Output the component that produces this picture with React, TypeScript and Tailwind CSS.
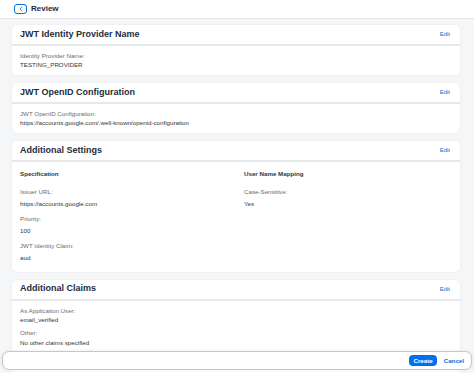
import { ChevronLeft } from "lucide-react";

const font = { fontFamily: "'Liberation Sans', Arial, sans-serif" };

function Card({ title, children }: { title: string; children: React.ReactNode }) {
  return (
    <section className="rounded-[5px] bg-white shadow-[0_0_2px_rgba(0,0,0,0.08)]">
      <div className="flex h-[21px] items-center justify-between border-b-2 border-[#e6e8ea] pl-2 pr-[10px]">
        <h2 className="text-[9px] font-bold text-[#1d2d3e]">{title}</h2>
        <button className="text-[6px] text-[#0a6ed1]">Edit</button>
      </div>
      {children}
    </section>
  );
}

function Field({ label, value, gap = "" }: { label: string; value: string; gap?: string }) {
  return (
    <div>
      <p className="text-[6.2px] leading-[9px] text-[#6a6d70]">{label}</p>
      <p className={`${gap} text-[6.2px] leading-[9px] text-[#32363a]`}>{value}</p>
    </div>
  );
}

export default function App() {
  return (
    <div style={font} className="relative h-[373px] overflow-hidden bg-[#f5f6f7]">
      <header className="flex h-[18px] items-center gap-[4px] bg-white pl-[14px] shadow-[0_1px_1px_rgba(0,0,0,0.05)]">
        <span className="flex h-[10px] w-[13px] items-center justify-center rounded-[3px] border border-[#0a6ed1] text-[#0a6ed1]">
          <ChevronLeft className="h-[8px] w-[8px]" strokeWidth={2.5} />
        </span>
        <span className="text-[8px] font-bold text-[#1d2d3e]">Review</span>
      </header>

      <main className="space-y-[8px] pl-3 pr-[14px] pt-[7px]">
        <Card title="JWT Identity Provider Name">
          <div className="px-2 pb-[6px] pt-[5px]">
            <Field label="Identity Provider Name:" value="TESTING_PROVIDER" />
          </div>
        </Card>

        <Card title="JWT OpenID Configuration">
          <div className="px-2 pb-[6px] pt-[5px]">
            <Field
              label="JWT OpenID Configuration:"
              value="https://accounts.google.com/.well-known/openid-configuration"
            />
          </div>
        </Card>

        <Card title="Additional Settings">
          <div className="grid grid-cols-2 gap-x-4 px-2 pb-[10px] pt-[7px]">
            <div className="space-y-[6.5px]">
              <p className="mb-[9px] text-[6.2px] font-bold leading-[9px] text-[#32363a]">Specification</p>
              <Field label="Issuer URL:" value="https://accounts.google.com" gap="mt-[2.5px]" />
              <Field label="Priority:" value="100" gap="mt-[2.5px]" />
              <Field label="JWT Identity Claim:" value="aud" gap="mt-[2.5px]" />
            </div>
            <div className="space-y-[6.5px]">
              <p className="mb-[9px] text-[6.2px] font-bold leading-[9px] text-[#32363a]">User Name Mapping</p>
              <Field label="Case-Sensitive:" value="Yes" gap="mt-[2.5px]" />
            </div>
          </div>
        </Card>

        <Card title="Additional Claims">
          <div className="space-y-[4px] px-2 pb-[30px] pt-[5px]">
            <Field label="As Application User:" value="email_verified" />
            <Field label="Other:" value="No other claims specified" gap="mt-[1px]" />
          </div>
        </Card>
      </main>

      <footer className="absolute bottom-[3px] left-[2px] right-[2px] flex h-[19px] items-center justify-end gap-[7px] rounded-[7px] border border-[#c4c8cc] bg-white pr-[7px] shadow-[0_0_3px_rgba(0,0,0,0.1)]">
        <button className="h-[11px] rounded-[4px] bg-[#0070f2] px-[4px] text-[6.2px] font-bold leading-[11px] text-white">
          Create
        </button>
        <button className="text-[6.2px] font-bold text-[#0a6ed1]">Cancel</button>
      </footer>
    </div>
  );
}
